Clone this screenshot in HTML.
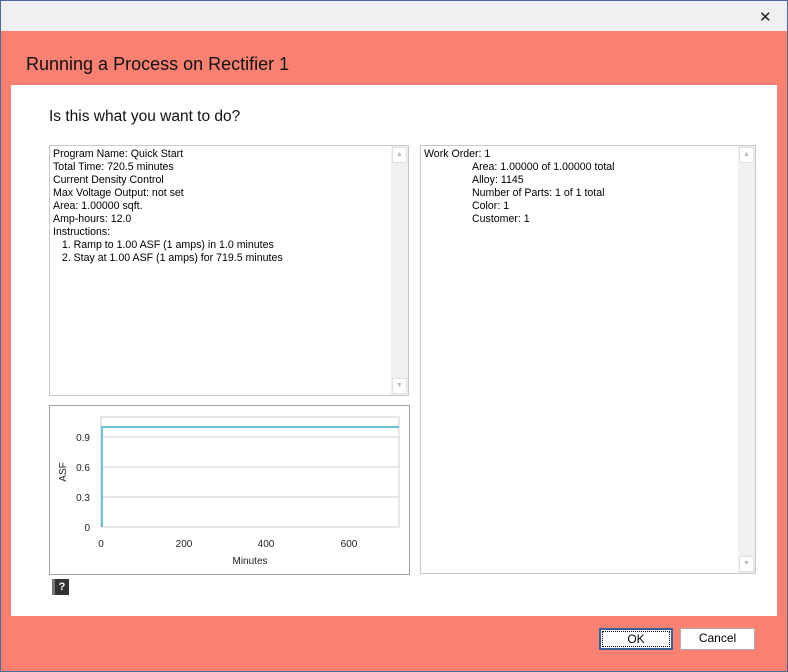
<!DOCTYPE html><html><head><style>
*{margin:0;padding:0;box-sizing:border-box}
body{width:788px;height:672px;background:#fa8072;position:relative;font-family:"Liberation Sans",sans-serif;overflow:hidden;border:1px solid #4a6a9a}
.a{position:absolute}
.txt{font-size:10.6px;line-height:13px;color:#000}
.sb{position:absolute;right:0;top:0;bottom:0;width:17px;background:#f0f0f0}
.sb .u,.sb .d{position:absolute;left:1px;width:15px;height:16px;background:#fff;border:1px solid #e0e0e0;font-size:7px;color:#bbb;text-align:center;line-height:14px}
.btn{position:absolute;background:#fff;border:1px solid #adadad;font-size:12px;text-align:center;line-height:19px}
</style></head><body>
<div class="a" style="left:0;top:0;width:786px;height:30px;background:#f0f0f0"></div>
<div class="a" style="left:758px;top:7px;font-size:15px;color:#222">✕</div>
<div class="a" style="left:25px;top:53px;font-size:18px;color:#111">Running a Process on Rectifier 1</div>
<div class="a" style="left:10px;top:84px;width:766px;height:531px;background:#fff"></div>
<div class="a" style="left:48px;top:107px;font-size:15.5px;color:#111">Is this what you want to do?</div>
<div class="a txt" style="left:48px;top:144px;width:360px;height:251px;border:1px solid #c8c8c8;padding:2px 3px">
Program Name: Quick Start<br>Total Time: 720.5 minutes<br>Current Density Control<br>Max Voltage Output: not set<br>Area: 1.00000 sqft.<br>Amp-hours: 12.0<br>Instructions:<br>&nbsp;&nbsp;&nbsp;1. Ramp to 1.00 ASF (1 amps) in 1.0 minutes<br>&nbsp;&nbsp;&nbsp;2. Stay at 1.00 ASF (1 amps) for 719.5 minutes
<div class="sb"><div class="u" style="top:1px">▲</div><div class="d" style="bottom:1px">▼</div></div></div>
<div class="a txt" style="left:419px;top:144px;width:336px;height:429px;border:1px solid #c8c8c8;padding:2px 3px">
Work Order: 1<br><div style="padding-left:48px">Area: 1.00000 of 1.00000 total<br>Alloy: 1145<br>Number of Parts: 1 of 1 total<br>Color: 1<br>Customer: 1</div>
<div class="sb"><div class="u" style="top:1px">▲</div><div class="d" style="bottom:1px">▼</div></div></div>
<div class="a" style="left:48px;top:404px;width:361px;height:170px;border:1px solid #a0a0a0;background:#fff">
<svg width="359" height="168" style="font-family:'Liberation Sans',sans-serif;font-size:10px">
<rect x="51" y="11" width="298" height="110" fill="none" stroke="#ccc"/>
<g stroke="#ccc"><line x1="51" y1="31" x2="349" y2="31"/><line x1="51" y1="61" x2="349" y2="61"/><line x1="51" y1="91" x2="349" y2="91"/></g>
<polyline points="52,121 52,21 349,21" fill="none" stroke="#6ec1d8" stroke-width="2"/>
<g fill="#222" text-anchor="end"><text x="40" y="35">0.9</text><text x="40" y="65">0.6</text><text x="40" y="95">0.3</text><text x="40" y="125">0</text></g>
<g fill="#222" text-anchor="middle"><text x="51" y="141">0</text><text x="134" y="141">200</text><text x="216" y="141">400</text><text x="299" y="141">600</text><text x="200" y="158">Minutes</text></g>
<text transform="translate(16,66) rotate(-90)" text-anchor="middle" fill="#222">ASF</text>
</svg></div>
<div class="a" style="left:51px;top:578px;width:17px;height:16px;background:#333;color:#fff;font-size:11px;font-weight:bold;text-align:center;line-height:16px;border-left:3px solid #777">?</div>
<div class="btn" style="left:598px;top:627px;width:74px;height:22px;border:2px solid #3a5f9a;outline:1px dotted #000;outline-offset:-4px">OK</div>
<div class="btn" style="left:679px;top:627px;width:75px;height:22px">Cancel</div>
</body></html>
